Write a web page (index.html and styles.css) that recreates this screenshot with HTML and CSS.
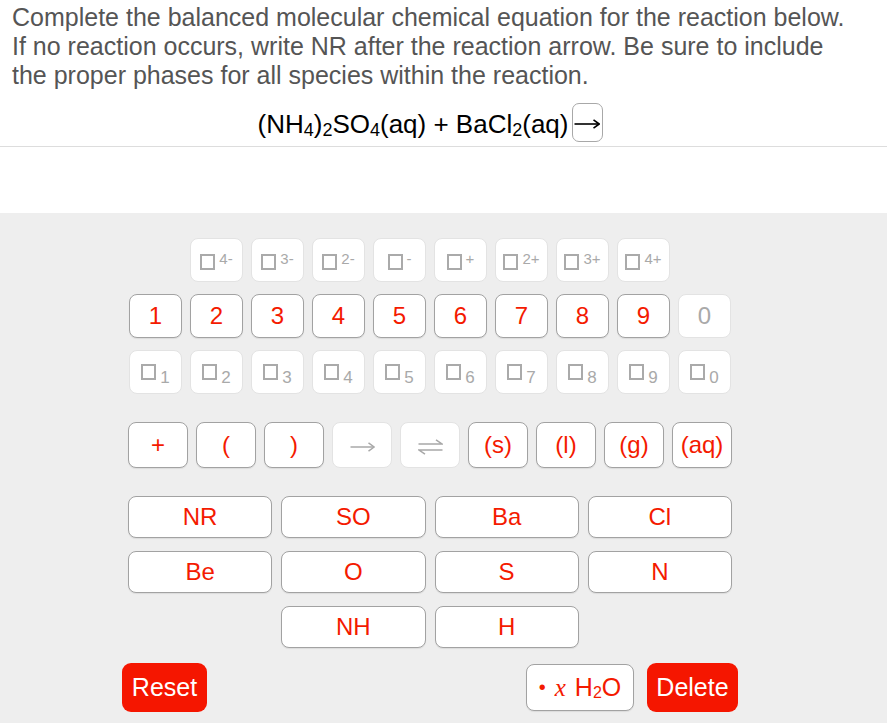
FILE: index.html
```html
<!DOCTYPE html>
<html>
<head>
<meta charset="utf-8">
<link rel="stylesheet" href="styles.css">
</head>
<body>
<div class="question">
  <p class="prompt">Complete the balanced molecular chemical equation for the reaction below.<br>If no reaction occurs, write NR after the reaction arrow. Be sure to include<br>the proper phases for all species within the reaction.</p>
  <div class="equation">
    <span class="eq-text">(NH<sub>4</sub>)<sub>2</sub>SO<sub>4</sub>(aq) + BaCl<sub>2</sub>(aq)</span>
    <span class="answer"><svg class="ans-arrow" width="26" height="12" viewBox="0 0 26 12"><path d="M0.5 6 H25" fill="none" stroke="#000" stroke-width="1.6"/><path d="M19.5 1.8 L25.2 6 L19.5 10.2" fill="none" stroke="#000" stroke-width="1.6" stroke-linejoin="miter"/></svg></span>
  </div>
</div>
<div class="blank"></div>
<div class="panel">
  <div class="keypad">
    <div class="row row-charge">
      <div class="key off"><span class="sq"></span><span class="sup">4-</span></div>
      <div class="key off"><span class="sq"></span><span class="sup">3-</span></div>
      <div class="key off"><span class="sq"></span><span class="sup">2-</span></div>
      <div class="key off"><span class="sq"></span><span class="sup">-</span></div>
      <div class="key off"><span class="sq"></span><span class="sup">+</span></div>
      <div class="key off"><span class="sq"></span><span class="sup">2+</span></div>
      <div class="key off"><span class="sq"></span><span class="sup">3+</span></div>
      <div class="key off"><span class="sq"></span><span class="sup">4+</span></div>
    </div>
    <div class="row row-num">
      <div class="key">1</div>
      <div class="key">2</div>
      <div class="key">3</div>
      <div class="key">4</div>
      <div class="key">5</div>
      <div class="key">6</div>
      <div class="key">7</div>
      <div class="key">8</div>
      <div class="key">9</div>
      <div class="key off">0</div>
    </div>
    <div class="row row-num">
      <div class="key off"><span class="sq"></span><span class="sub">1</span></div>
      <div class="key off"><span class="sq"></span><span class="sub">2</span></div>
      <div class="key off"><span class="sq"></span><span class="sub">3</span></div>
      <div class="key off"><span class="sq"></span><span class="sub">4</span></div>
      <div class="key off"><span class="sq"></span><span class="sub">5</span></div>
      <div class="key off"><span class="sq"></span><span class="sub">6</span></div>
      <div class="key off"><span class="sq"></span><span class="sub">7</span></div>
      <div class="key off"><span class="sq"></span><span class="sub">8</span></div>
      <div class="key off"><span class="sq"></span><span class="sub">9</span></div>
      <div class="key off"><span class="sq"></span><span class="sub">0</span></div>
    </div>
    <div class="row row-sym">
      <div class="key">+</div>
      <div class="key">(</div>
      <div class="key">)</div>
      <div class="key off"><svg class="sym" width="25" height="12" viewBox="0 0 25 12"><path d="M0.5 6 H24" fill="none" stroke="#a8a8a8" stroke-width="1.5"/><path d="M18.5 1.8 L24.2 6 L18.5 10.2" fill="none" stroke="#a8a8a8" stroke-width="1.5"/></svg></div>
      <div class="key off"><svg class="sym" width="25" height="16" viewBox="0 0 25 16"><path d="M0.5 5 H24 L18 0.8" fill="none" stroke="#a8a8a8" stroke-width="1.5"/><path d="M24.5 11 H1 L7 15.2" fill="none" stroke="#a8a8a8" stroke-width="1.5"/></svg></div>
      <div class="key">(s)</div>
      <div class="key">(l)</div>
      <div class="key">(g)</div>
      <div class="key">(aq)</div>
    </div>
    <div class="elements">
      <div class="key el">NR</div>
      <div class="key el">SO</div>
      <div class="key el">Ba</div>
      <div class="key el">Cl</div>
      <div class="key el">Be</div>
      <div class="key el">O</div>
      <div class="key el">S</div>
      <div class="key el">N</div>
      <div class="key el c2">NH</div>
      <div class="key el">H</div>
    </div>
  </div>
  <div class="actions">
    <div class="btn-red reset">Reset</div>
    <div class="right">
      <div class="key hydrate"><span class="dot">&bull;</span><span class="xvar">x</span>H<span class="hsub">2</span>O</div>
      <div class="btn-red delete">Delete</div>
    </div>
  </div>
</div>
</body>
</html>
```
FILE: styles.css
```css
html, body {
  margin: 0;
  padding: 0;
  background: #ffffff;
}
body {
  font-family: "Liberation Sans", Arial, sans-serif;
  width: 887px;
  height: 723px;
  overflow: hidden;
}
.question {
  border-bottom: 1px solid #dddddd;
}
.prompt {
  margin: 0;
  padding: 3px 0 0 12px;
  font-size: 25px;
  line-height: 29px;
  color: #555555;
  white-space: nowrap;
}
.equation {
  display: flex;
  justify-content: center;
  align-items: center;
  margin-top: 13px;
  height: 39px;
  padding-bottom: 4px;
  padding-right: 27px;
}
.equation .eq-text {
  font-size: 26px;
  color: #000;
  padding-top: 3px;
  white-space: nowrap;
}
.equation sub {
  font-size: 18px;
  vertical-align: -3px;
  line-height: 0;
}
.answer {
  box-sizing: border-box;
  width: 31px;
  height: 39px;
  margin-left: 3px;
  border: 1px solid #a8a8a8;
  border-radius: 7px;
  display: flex;
  align-items: center;
  justify-content: center;
  padding-top: 3px;
}
.ans-arrow {
  display: block;
}
.blank {
  height: 66px;
}
.panel {
  background: #eeeeee;
  height: 510px;
  padding-top: 25px;
  box-sizing: border-box;
}
.keypad {
  width: 604px;
  margin-left: 128px;
}
.row {
  display: flex;
  justify-content: center;
  gap: 8px;
  margin-bottom: 12px;
}
.key {
  box-sizing: border-box;
  background: #ffffff;
  border: 1px solid #a2a2a2;
  border-radius: 8px;
  color: #f41a00;
  font-size: 24px;
  display: flex;
  align-items: center;
  justify-content: center;
  box-shadow: 0 1px 1px rgba(0,0,0,0.08);
}
.key.off {
  border-color: #e3e3e3;
  color: #a9a9a9;
  box-shadow: none;
}
.row-charge .key {
  width: 53px;
  height: 44px;
}
.row-num .key {
  width: 53px;
  height: 44px;
}
.row-sym {
  margin-top: 28px;
  margin-bottom: 28px;
}
.row-sym .key {
  width: 60px;
  height: 46px;
}
.sym {
  display: block;
  margin-top: 4px;
}
.sq {
  display: inline-block;
  box-sizing: border-box;
  width: 15px;
  height: 16px;
  border: 2px solid #aaaaaa;
}
.sup {
  font-size: 15px;
  align-self: flex-start;
  margin-top: 11px;
  margin-left: 4px;
  color: #a9a9a9;
}
.sub {
  font-size: 17px;
  align-self: flex-end;
  margin-bottom: 5px;
  margin-left: 4px;
  color: #a9a9a9;
}
.row-charge .key .sq {
  margin-top: 3px;
}
.elements {
  display: grid;
  grid-template-columns: repeat(4, 1fr);
  column-gap: 9px;
  row-gap: 13px;
}
.key.el {
  height: 42px;
}
.c2 {
  grid-column: 2;
}
.actions {
  display: flex;
  justify-content: space-between;
  align-items: center;
  width: 616px;
  margin-left: 122px;
  margin-top: 15px;
}
.right {
  display: flex;
  align-items: center;
  gap: 13px;
}
.btn-red {
  box-sizing: border-box;
  height: 49px;
  background: #f51600;
  color: #ffffff;
  border-radius: 9px;
  font-size: 25px;
  display: flex;
  align-items: center;
  justify-content: center;
}
.reset {
  width: 85px;
}
.delete {
  width: 91px;
}
.hydrate {
  width: 108px;
  height: 47px;
  font-size: 25px;
}
.dot {
  font-size: 20px;
}
.xvar {
  font-family: "Liberation Serif", serif;
  font-style: italic;
  margin: 0 9px 0 9px;
}
.hsub {
  font-size: 16px;
  position: relative;
  top: 5px;
}
```
